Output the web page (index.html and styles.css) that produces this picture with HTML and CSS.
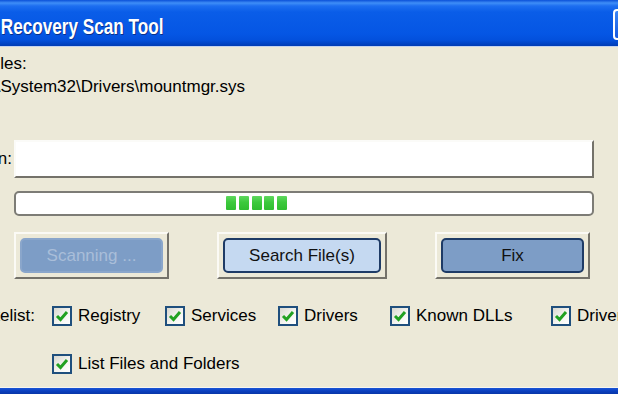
FILE: index.html
```html
<!DOCTYPE html>
<html lang="en">
<head>
  <meta charset="UTF-8" />
  <meta name="viewport" content="width=device-width, initial-scale=1.0" />
  <title>Recovery Scan Tool</title>
  <link rel="stylesheet" href="styles.css">
</head>
<body>
  <div class="window">
    <div class="titlebar">
      <div class="title">Recovery Scan Tool</div>
      <div class="controls">
        <span class="ctl-btn"></span>
      </div>
    </div>

    <div class="content">
      <div class="files">
        <div class="files-label">Files:</div>
        <div class="files-path">C:\WINDOWS\System32\Drivers\mountmgr.sys</div>
      </div>

      <div class="location-row">
        <div class="label"><span>Scan Location:</span></div>
        <div class="text-input"></div>
      </div>

      <div class="progress">
        <div class="chunks">
          <span></span><span></span><span></span><span></span><span></span>
        </div>
      </div>

      <div class="buttons">
        <div class="btn-frame">
          <button class="btn btn-disabled" disabled>Scanning ...</button>
        </div>
        <div class="btn-frame">
          <button class="btn btn-light btn-wide">Search File(s)</button>
        </div>
        <div class="btn-frame">
          <button class="btn btn-dark">Fix</button>
        </div>
      </div>

      <div class="whitelist">
        <div class="label wl-label"><span>Whitelist:</span></div>
        <label class="check"><span class="box"></span>Registry</label>
        <label class="check"><span class="box"></span>Services</label>
        <label class="check"><span class="box"></span>Drivers</label>
        <label class="check"><span class="box"></span>Known DLLs</label>
        <label class="check"><span class="box"></span>Drivers Only</label>
        <label class="check second"><span class="box"></span>List Files and Folders</label>
      </div>
    </div>

    <div class="frame-bottom"></div>
  </div>
</body>
</html>
```

FILE: styles.css
```css
body {
  margin: 0;
  width: 618px;
  height: 394px;
  overflow: hidden;
  background: #ece9d8;
  font-family: "Liberation Sans", Arial, sans-serif;
  font-size: 17px;
  color: #000;
}
.window {
  display: flex;
  flex-direction: column;
  height: 394px;
}

/* title bar */
.titlebar {
  height: 46px;
  flex-shrink: 0;
  display: flex;
  align-items: flex-start;
  overflow: hidden;
  border-bottom: 1px solid #c4d3ee;
  background: linear-gradient(to bottom, #0b50d8 0, #3f8ef7 3px, #1d6ef0 6px, #0a5de8 12px, #0556e4 34px, #0350dc 40px, #003cb4 46px);
}
.title {
  flex: 1;
  padding: 14px 0 0 1px;
  font-weight: bold;
  font-size: 22px;
  color: #fff;
  text-shadow: 1px 1px 0 #0a2f8a;
  white-space: nowrap;
  transform: scaleX(0.78);
  transform-origin: left center;
}
.controls {
  flex-shrink: 0;
  width: 100px;
  margin: 9px -95px 0 0;
  display: flex;
}
.ctl-btn {
  width: 31px;
  height: 31px;
  box-sizing: border-box;
  border: 2px solid #fff;
  border-radius: 4px;
  background: linear-gradient(to bottom, #3c86f5, #1659e0);
}

/* dialog body */
.content {
  flex: 1;
  padding-right: 24px;
}
.files {
  margin-top: 5px;
  line-height: 23px;
  white-space: nowrap;
}
.files-label {
  margin-left: -14px;
}
.files-path {
  margin-left: -112px;
}

.label {
  display: flex;
  justify-content: flex-end;
  white-space: nowrap;
  flex-shrink: 0;
}

.location-row {
  margin-top: 42px;
  display: flex;
  align-items: center;
}
.location-row .label {
  width: 12px;
  margin-right: 2px;
}
.text-input {
  flex: 1;
  height: 38px;
  box-sizing: border-box;
  background: #fff;
  border: 2px solid;
  border-color: #fbfbf8 #74726a #74726a #fbfbf8;
}

.progress {
  margin: 13px 0 0 14px;
  height: 25px;
  box-sizing: border-box;
  border: 2px solid #7d7c76;
  border-radius: 5px;
  background: #fff;
  padding: 3px 0 0 210px;
}
.chunks {
  display: flex;
  gap: 2.75px;
}
.chunks span {
  width: 10px;
  height: 14px;
  border-radius: 1px;
  background: linear-gradient(to bottom, #5fd85f, #3cc93c 45%, #2fbd2f);
}

/* buttons */
.buttons {
  margin: 16px 4px 0 14px;
  display: flex;
  justify-content: space-between;
}
.btn-frame {
  border: 2px solid;
  border-color: #fbfaf5 #74726a #74726a #fbfaf5;
  padding: 4px;
}
.btn {
  display: block;
  width: 143px;
  height: 35px;
  box-sizing: border-box;
  border: 2px solid #1e3b66;
  border-radius: 5px;
  font-family: inherit;
  font-size: 17px;
  color: #111;
  padding: 0;
}
.btn-wide { width: 158px; }
.btn-light { background: #c5d9f1; }
.btn-dark { background: #7d9dc6; }
.btn-disabled {
  background: #7d9dc6;
  border-color: #8aa6cb;
  color: #a9bed9;
}

/* whitelist checkboxes */
.whitelist {
  margin-top: 27px;
  display: grid;
  grid-template-columns: 52px 113px 113px 112px 161px auto;
  row-gap: 28px;
  align-items: center;
}
.wl-label {
  padding-right: 17px;
  width: 35px;
}
.check {
  display: flex;
  align-items: center;
  gap: 6px;
  white-space: nowrap;
  height: 20px;
}
.check.second {
  grid-column: 2 / span 4;
}
.box {
  width: 20px;
  height: 20px;
  box-sizing: border-box;
  border: 2px solid #1f4f7d;
  background-image: url("data:image/svg+xml,%3Csvg xmlns='http://www.w3.org/2000/svg' viewBox='0 0 16 16'%3E%3Cpolyline points='3,8 6.5,11.5 13,4' fill='none' stroke='%2321a121' stroke-width='3'/%3E%3C/svg%3E"), linear-gradient(135deg, #d9d8d0, #f6f6f2 60%, #fff);
  flex-shrink: 0;
}

.frame-bottom {
  height: 6px;
  flex-shrink: 0;
  border-top: 1px solid #f6f5ef;
  background: linear-gradient(to bottom, #1a55d6, #0a3fbf 3px, #0836a8);
}
```
